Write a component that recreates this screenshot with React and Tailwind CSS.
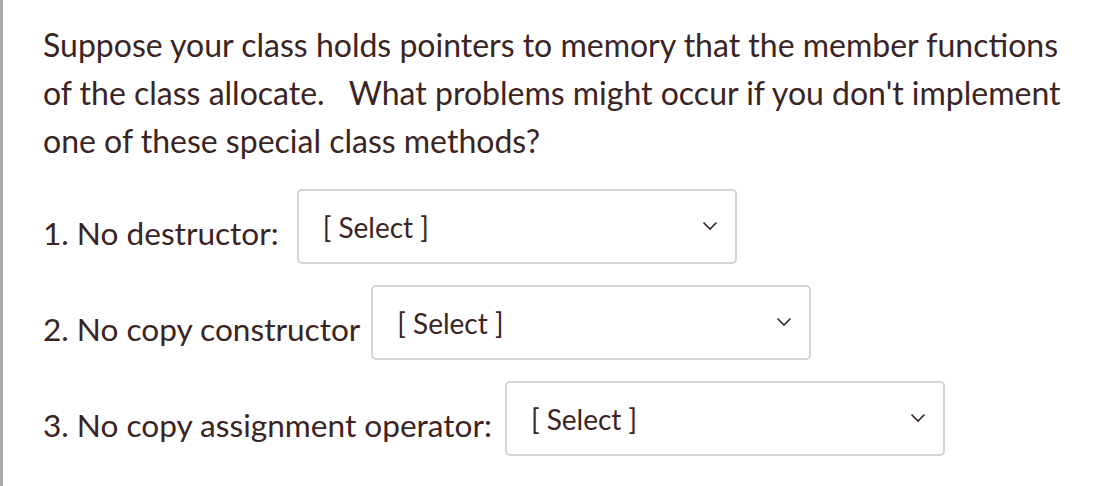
import React from "react";

function Chevron() {
  return (
    <svg width="16" height="10" viewBox="0 0 16 10" className="shrink-0">
      <path d="M1.5 1.5 L8 8 L14.5 1.5" fill="none" stroke="#3a2424" strokeWidth="1.6" />
    </svg>
  );
}

function FakeSelect() {
  return (
    <div className="w-[440px] h-[75px] border-2 border-[#d4d4d4] rounded-[5px] bg-white flex items-center justify-between pl-[24px] pr-[17px]">
      <span className="text-[28px] leading-none">[ Select ]</span>
      <span className="pb-[2px]">
        <Chevron />
      </span>
    </div>
  );
}

export default function App() {
  const rows = [
    { label: "1. No destructor:", gap: "gap-[18px]" },
    { label: "2. No copy constructor", gap: "gap-[11px]" },
    { label: "3. No copy assignment operator:", gap: "gap-[13px]" },
  ];

  return (
    <div
      className="w-[1101px] h-[486px] bg-white border-l-[3px] border-[#a9a9a9] text-[#3a2424] pl-[40px] pt-[21px]"
      style={{ fontFamily: "Lato, 'Open Sans', sans-serif" }}
    >
      {/* Question */}
      <p className="text-[32px] leading-[48px] w-[1030px]">
        Suppose your class holds pointers to memory that the member functions of the
        class allocate.&nbsp;&nbsp; What problems might occur if you don't implement
        one of these special class methods?
      </p>

      {/* Answers */}
      <div className="flex flex-col gap-[21px] mt-[24px]">
        {rows.map((r) => (
          <div key={r.label} className={`flex items-center ${r.gap}`}>
            <span className="text-[31.6px] leading-[48px] pt-[12px]">{r.label}</span>
            <FakeSelect />
          </div>
        ))}
      </div>
    </div>
  );
}
